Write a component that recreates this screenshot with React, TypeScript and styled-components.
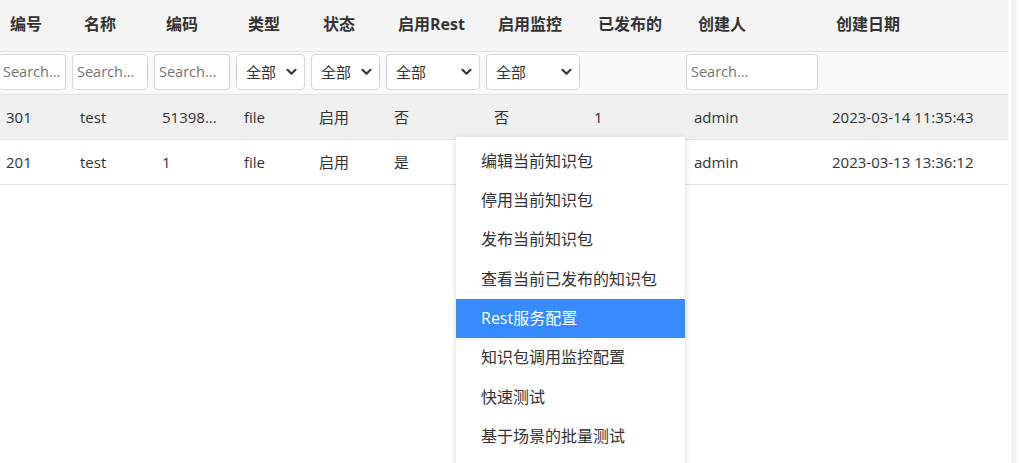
import React from "react";
import styled, { createGlobalStyle } from "styled-components";

const Global = createGlobalStyle`
  html, body { margin: 0; padding: 0; background: #fff; }
  body { font-family: "Open Sans", "Noto Sans CJK SC", sans-serif; color: #333; overflow: hidden; }
  * { box-sizing: border-box; }
`;

const Page = styled.div`
  display: flex;
  width: 1020px;
  height: 463px;
  position: relative;
`;

const TableViewport = styled.div`
  width: 1008px;
  height: 463px;
  overflow: hidden;
  flex: none;
`;

const ScrollTrack = styled.div`
  width: 6px;
  margin-left: 3px;
  height: 463px;
  background: #f2f2f2;
`;

const Table = styled.table`
  table-layout: fixed;
  border-collapse: collapse;
  width: 1012px;
  margin-left: -4px;
  font-size: 16px;
`;

const HeadRow = styled.tr`
  background: #f5f5f5;
  height: 51px;
  border-bottom: 1px solid #e2e2e2;
`;

const Th = styled.th`
  text-align: left;
  font-weight: 700;
  padding: 0 0 4px 14px;
  font-size: 16px;
  color: #333;
  white-space: nowrap;
  overflow: hidden;
  font-family: "Open Sans", "Noto Sans CJK SC", sans-serif;
`;

const FilterRow = styled.tr`
  background: #f9f9f9;
  height: 43px;
  border-bottom: 1px solid #e2e2e2;
`;

const FilterCell = styled.td`
  padding: 2px 4px 4px 2px;
  vertical-align: top;
`;

const SearchInput = styled.input`
  width: 100%;
  height: 36px;
  border: 1px solid #d3d6db;
  border-radius: 4px;
  background: #fff;
  font-family: "Open Sans", "Noto Sans CJK SC", sans-serif;
  font-size: 14.5px;
  padding: 0 4px;
  display: block;
  &::placeholder { color: #757575; }
`;

const SelectBox = styled.div`
  position: relative;
  height: 36px;
  width: 100%;
`;

const Select = styled.select`
  appearance: none;
  width: 100%;
  height: 36px;
  border: 1px solid #d3d6db;
  border-radius: 4px;
  background: #fff;
  font-family: "Open Sans", "Noto Sans CJK SC", sans-serif;
  font-size: 15px;
  color: #333;
  padding: 0 0 0 9px;
  display: block;
`;

const Chevron = styled.svg`
  position: absolute;
  right: 8px;
  top: 14px;
  width: 11px;
  height: 8px;
  pointer-events: none;
`;

const BodyRow = styled.tr<{ $hover?: boolean }>`
  height: 45px;
  background: ${(p) => (p.$hover ? "#f0f0f0" : "#fff")};
  border-bottom: 1px solid #e2e2e2;
`;

const Td = styled.td`
  padding: 0 0 0 10px;
  font-size: 15px;
  color: #333;
  white-space: nowrap;
  overflow: hidden;
`;

const Menu = styled.ul`
  position: absolute;
  left: 456px;
  top: 137px;
  width: 229px;
  height: 340px;
  margin: 0;
  padding: 4.5px 0 0;
  list-style: none;
  background: #fff;
  box-shadow: 0 1px 6px rgba(0, 0, 0, 0.16);
`;

const MenuItem = styled.li<{ $active?: boolean }>`
  height: 39.4px;
  line-height: 39.4px;
  padding-left: 25px;
  font-size: 16px;
  color: ${(p) => (p.$active ? "#fff" : "#333")};
  background: ${(p) => (p.$active ? "#388bff" : "transparent")};
  font-family: "Open Sans", "Noto Sans CJK SC", sans-serif;
  white-space: nowrap;
`;

const widths = [74, 82, 82, 75, 75, 100, 100, 100, 138, 186];
const headers = ["编号", "名称", "编码", "类型", "状态", "启用Rest", "启用监控", "已发布的", "创建人", "创建日期"];

type Filter = { kind: "search" } | { kind: "select" } | { kind: "none" };
const filters: Filter[] = [
  { kind: "search" },
  { kind: "search" },
  { kind: "search" },
  { kind: "select" },
  { kind: "select" },
  { kind: "select" },
  { kind: "select" },
  { kind: "none" },
  { kind: "search" },
  { kind: "none" },
];

const rows = [
  ["301", "test", "51398...", "file", "启用", "否", "否", "1", "admin", "2023-03-14 11:35:43"],
  ["201", "test", "1", "file", "启用", "是", "", "", "admin", "2023-03-13 13:36:12"],
];

const menuItems = [
  "编辑当前知识包",
  "停用当前知识包",
  "发布当前知识包",
  "查看当前已发布的知识包",
  "Rest服务配置",
  "知识包调用监控配置",
  "快速测试",
  "基于场景的批量测试",
];

const ChevronIcon = () => (
  <Chevron viewBox="0 0 11 8">
    <path d="M1.5 1.8 L5.5 5.8 L9.5 1.8" fill="none" stroke="#343a40" strokeWidth="2.2" strokeLinecap="round" strokeLinejoin="round" />
  </Chevron>
);

export default function App() {
  return (
    <Page>
      <Global />
      <TableViewport>
        <Table>
          <colgroup>
            {widths.map((w, i) => (
              <col key={i} style={{ width: w }} />
            ))}
          </colgroup>
          <thead>
            <HeadRow>
              {headers.map((h) => (
                <Th key={h}>{h}</Th>
              ))}
            </HeadRow>
            <FilterRow>
              {filters.map((f, i) => (
                <FilterCell key={i}>
                  {f.kind === "search" && <SearchInput placeholder="Search..." />}
                  {f.kind === "select" && (
                    <SelectBox>
                      <Select defaultValue="all">
                        <option value="all">全部</option>
                      </Select>
                      <ChevronIcon />
                    </SelectBox>
                  )}
                </FilterCell>
              ))}
            </FilterRow>
          </thead>
          <tbody>
            {rows.map((r, ri) => (
              <BodyRow key={ri} $hover={ri === 0}>
                {r.map((c, ci) => (
                  <Td key={ci}>{c}</Td>
                ))}
              </BodyRow>
            ))}
          </tbody>
        </Table>
      </TableViewport>
      <ScrollTrack />
      <Menu>
        {menuItems.map((m) => (
          <MenuItem key={m} $active={m === "Rest服务配置"}>
            {m}
          </MenuItem>
        ))}
      </Menu>
    </Page>
  );
}
